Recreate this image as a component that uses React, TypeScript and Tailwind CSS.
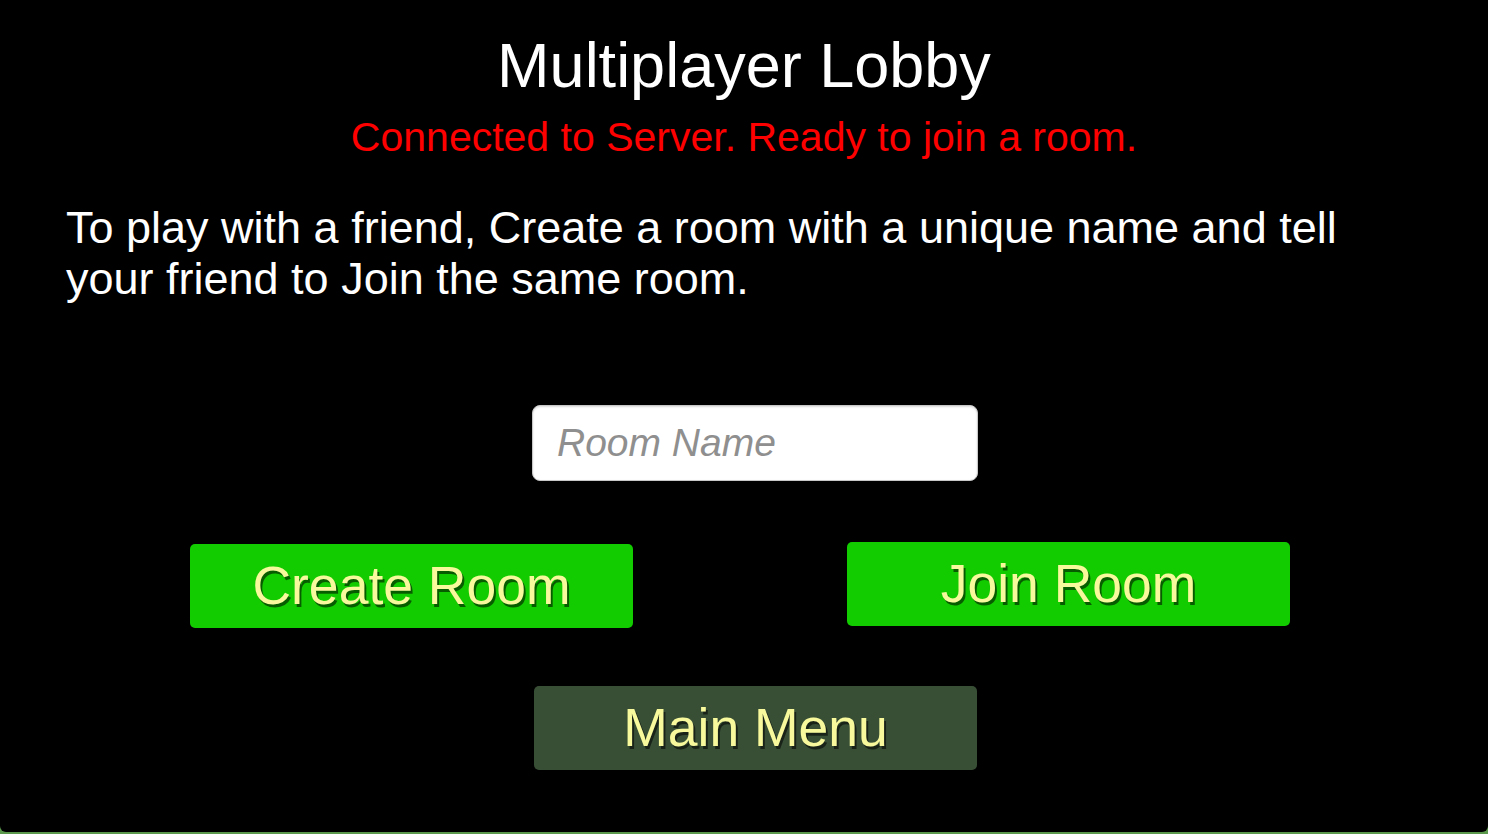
import React from "react";

const btnText =
  "text-[53.5px] leading-none text-[#f7f99c] [text-shadow:2px_3px_0_rgba(0,0,0,0.55)]";

export default function App() {
  return (
    <div
      className="w-[1488px] h-[834px] bg-[#5b9a4c] overflow-hidden"
      style={{ fontFamily: '"Liberation Sans", Arial, sans-serif' }}
    >
      <div className="w-full h-[832px] bg-black rounded-b-[6px] flex flex-col">
        <h1 className="mt-[34px] text-center text-white text-[63px] leading-none font-normal">
          Multiplayer Lobby
        </h1>
        <p className="mt-[20px] text-center text-[#ff0000] text-[41px] leading-none">
          Connected to Server. Ready to join a room.
        </p>
        <p className="mt-[44px] ml-[66px] w-[1320px] text-white text-[45px] leading-[51px]">
          To play with a friend, Create a room with a unique name and tell your friend to Join the same room.
        </p>
        <div className="mt-[101px] ml-[532px] w-[446px] h-[76px] rounded-[8px] bg-white border border-[#c8c8c8] shadow-[inset_0_1px_2px_rgba(0,0,0,0.15)] flex items-center pl-[24px]">
          <input
            placeholder="Room Name"
            className="w-full bg-transparent outline-none italic text-[39px] leading-none text-[#333] placeholder:text-[#8f8f8f]"
            style={{ fontFamily: '"Liberation Sans", Arial, sans-serif' }}
          />
        </div>
        <div className="mt-[61px] flex items-start">
          <button className="mt-[2px] ml-[190px] w-[443px] h-[84px] rounded-[5px] bg-[#12cc00] flex items-center justify-center">
            <span className={btnText}>Create Room</span>
          </button>
          <button className="ml-[214px] w-[443px] h-[84px] rounded-[5px] bg-[#12cc00] flex items-center justify-center">
            <span className={btnText}>Join Room</span>
          </button>
        </div>
        <button className="mt-[58px] ml-[534px] w-[443px] h-[84px] rounded-[5px] bg-[#384f36] flex items-center justify-center">
          <span className={btnText}>Main Menu</span>
        </button>
      </div>
    </div>
  );
}
